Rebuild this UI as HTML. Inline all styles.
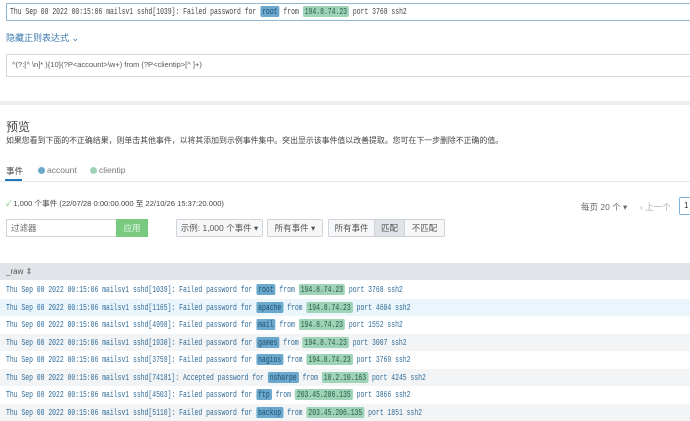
<!DOCTYPE html>
<html><head><meta charset="utf-8"><style>
*{margin:0;padding:0;box-sizing:border-box}
body{width:690px;height:411px;overflow:hidden;background:#fff;font-family:"Liberation Sans","Noto Sans CJK SC",sans-serif;position:relative;color:#333}
.abs{position:absolute}
.mono{font-family:"Liberation Mono",monospace;font-size:9.5px;white-space:nowrap}
.sq{display:inline-block;transform:scaleX(0.675);transform-origin:0 50%}
.a{background:#6aa8cc;border-radius:2px;padding:0 3px;color:#1f4f73}
.c{background:#9fd3b8;border-radius:2px;padding:0 3px;color:#2b5b46}
.row{position:absolute;left:0;width:690px;height:17.5px;line-height:17.5px;padding-left:6px;color:#2f6b99}
.btn{position:absolute;top:219px;height:18px;border:1px solid #d0d4d8;background:#f6f7f8;font-size:8.5px;line-height:16px;text-align:center;color:#555;border-radius:2px}
</style></head><body>
<div class="abs" style="left:6px;top:3px;width:690px;height:18px;border:1px solid #8fb8d8;"></div>
<div class="abs mono" style="left:10px;top:5px;line-height:13px;color:#444"><span class="sq">Thu Sep 08 2022 00:15:06 mailsv1 sshd[1039]: Failed password for <span class="a">root</span> from <span class="c">194.8.74.23</span> port 3768 ssh2</span></div>
<div class="abs" style="left:6px;top:31px;font-size:9px;color:#3a78b0">隐藏正则表达式 ⌄</div>
<div class="abs" style="left:6px;top:54px;width:690px;height:23px;border:1px solid #d5d8db;"></div>
<div class="abs" style="left:12px;top:60px;font-size:7.5px;color:#555">^(?:[^ \n]* ){10}(?P&lt;account&gt;\w+) from (?P&lt;clientip&gt;[^ ]+)</div>
<div class="abs" style="left:0;top:101px;width:690px;height:4px;background:#eceef0"></div>
<div class="abs" style="left:6px;top:118px;font-size:12px;color:#444">预览</div>
<div class="abs" style="left:6px;top:135px;font-size:7.9px;color:#444">如果您看到下面的不正确结果，则单击其他事件，以将其添加到示例事件集中。突出显示该事件值以改善提取。您可在下一步删除不正确的值。</div>
<div class="abs" style="left:6px;top:165px;font-size:8.5px;color:#444">事件</div>
<div class="abs" style="left:5px;top:179px;width:17px;height:2px;background:#1f78c1"></div>
<div class="abs" style="left:0;top:181px;width:690px;height:1px;background:#e4e6e8"></div>
<div class="abs" style="left:38px;top:167px;width:7px;height:7px;border-radius:50%;background:#6aa8cc"></div>
<div class="abs" style="left:47px;top:165px;font-size:8.5px;color:#777">account</div>
<div class="abs" style="left:90px;top:167px;width:7px;height:7px;border-radius:50%;background:#9fd3b8"></div>
<div class="abs" style="left:99px;top:165px;font-size:8.5px;color:#777">clientip</div>
<div class="abs" style="left:6px;top:198px;font-size:7.6px;color:#444"><span style="color:#5cb85c">✓</span> 1,000 个事件 (22/07/28 0:00:00.000 至 22/10/26 15:37:20.000)</div>
<div class="abs" style="left:581px;top:201px;font-size:8.5px;color:#666">每页 20 个 ▾</div>
<div class="abs" style="left:640px;top:201px;font-size:8.5px;color:#aaa">‹ 上一个</div>
<div class="abs" style="left:679px;top:197px;width:20px;height:18px;border:1px solid #7fb3dc;border-radius:2px;font-size:8px;line-height:16px;padding-left:4px">1</div>
<div class="abs" style="left:6px;top:219px;width:111px;height:18px;border:1px solid #d0d4d8;font-size:8.5px;line-height:16px;padding-left:4px;color:#666">过滤器</div>
<div class="abs" style="left:116px;top:219px;width:32px;height:18px;background:#79c97f;color:#e8f6ea;font-size:8.5px;line-height:18px;text-align:center">应用</div>
<div class="btn" style="left:176px;width:87px">示例: 1,000 个事件 ▾</div>
<div class="btn" style="left:267px;width:56px">所有事件 ▾</div>
<div class="btn" style="left:328px;width:47px;border-radius:2px 0 0 2px">所有事件</div>
<div class="btn" style="left:374px;width:31px;background:#dfe3e7;border-radius:0">匹配</div>
<div class="btn" style="left:404px;width:41px;border-radius:0 2px 2px 0">不匹配</div>
<div class="abs" style="left:0;top:263px;width:690px;height:17px;background:#e1e5e9"></div>
<div class="abs" style="left:6px;top:267px;font-size:8px;color:#555">_raw ⇕</div>
<div class="row mono" style="top:281px"><span class="sq">Thu Sep 08 2022 00:15:06 mailsv1 sshd[1039]: Failed password for <span class="a">root</span> from <span class="c">194.8.74.23</span> port 3768 ssh2</span></div>
<div class="row mono" style="top:298.5px;background:#eaf5fc"><span class="sq">Thu Sep 08 2022 00:15:06 mailsv1 sshd[1165]: Failed password for <span class="a">apache</span> from <span class="c">194.8.74.23</span> port 4604 ssh2</span></div>
<div class="row mono" style="top:316px"><span class="sq">Thu Sep 08 2022 00:15:06 mailsv1 sshd[4998]: Failed password for <span class="a">mail</span> from <span class="c">194.8.74.23</span> port 1552 ssh2</span></div>
<div class="row mono" style="top:333.5px;background:#f3f4f5"><span class="sq">Thu Sep 08 2022 00:15:06 mailsv1 sshd[1930]: Failed password for <span class="a">games</span> from <span class="c">194.8.74.23</span> port 3007 ssh2</span></div>
<div class="row mono" style="top:351px"><span class="sq">Thu Sep 08 2022 00:15:06 mailsv1 sshd[3759]: Failed password for <span class="a">nagios</span> from <span class="c">194.8.74.23</span> port 3769 ssh2</span></div>
<div class="row mono" style="top:368.5px;background:#f3f4f5"><span class="sq">Thu Sep 08 2022 00:15:06 mailsv1 sshd[74181]: Accepted password for <span class="a">nsharpe</span> from <span class="c">10.2.10.163</span> port 4245 ssh2</span></div>
<div class="row mono" style="top:386px"><span class="sq">Thu Sep 08 2022 00:15:06 mailsv1 sshd[4503]: Failed password for <span class="a">ftp</span> from <span class="c">203.45.206.135</span> port 3866 ssh2</span></div>
<div class="row mono" style="top:403.5px;background:#f3f4f5"><span class="sq">Thu Sep 08 2022 00:15:06 mailsv1 sshd[5110]: Failed password for <span class="a">backup</span> from <span class="c">203.45.206.135</span> port 1851 ssh2</span></div>
</body></html>
